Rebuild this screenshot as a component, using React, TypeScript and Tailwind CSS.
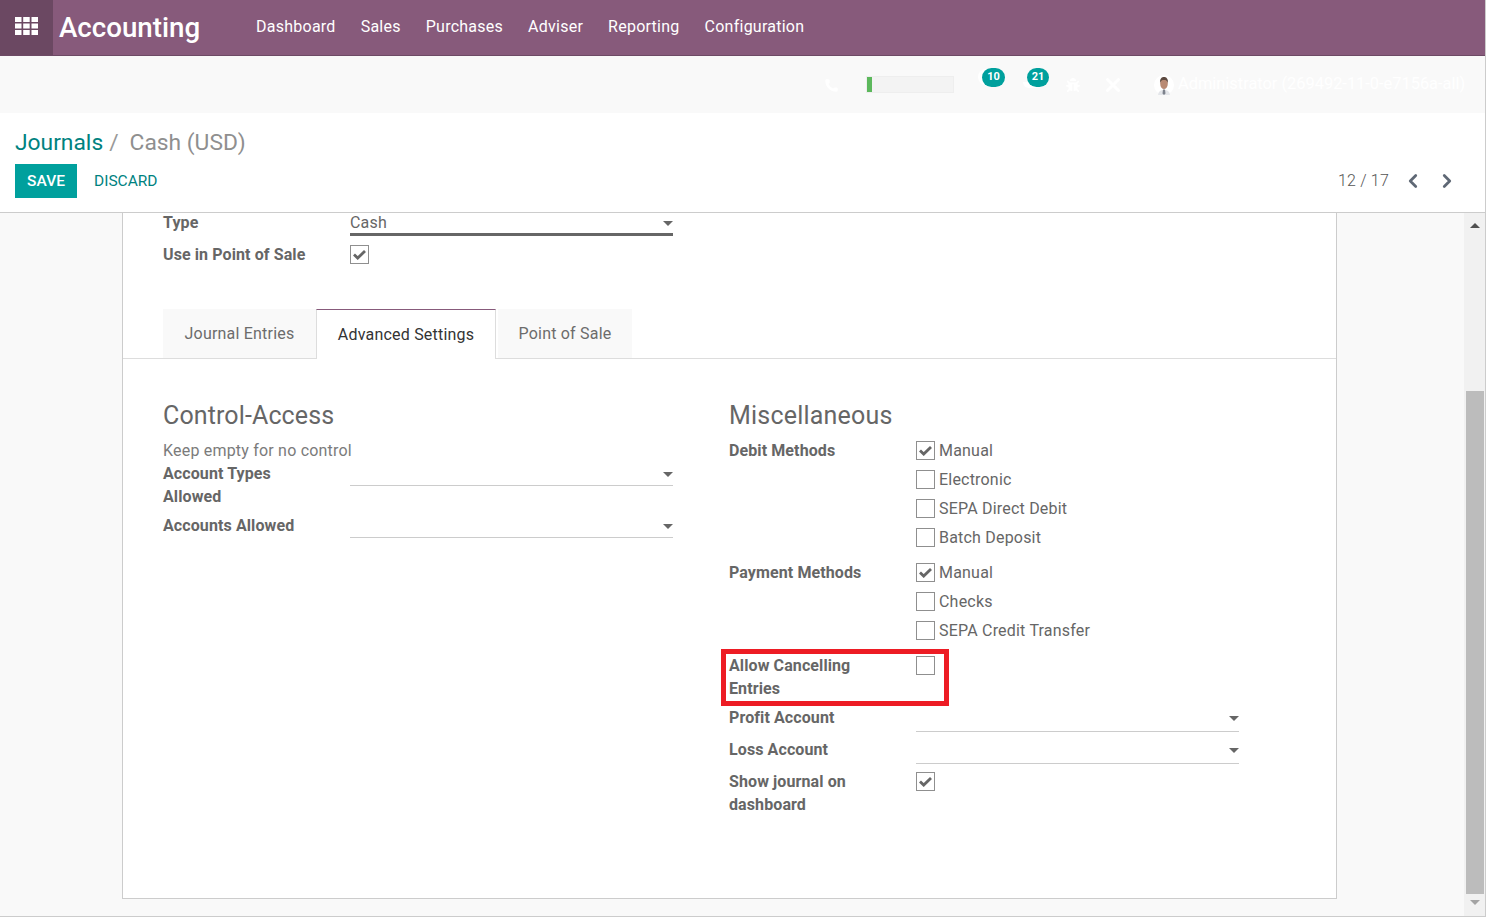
import { Phone, ChevronLeft, ChevronRight } from "lucide-react";
import { FaBug } from "react-icons/fa";

const navItems = ["Dashboard", "Sales", "Purchases", "Adviser", "Reporting", "Configuration"];

function Box({ checked = false }: { checked?: boolean }) {
  return (
    <span className="flex h-[19px] w-[19px] shrink-0 items-center justify-center border border-[#8f8f8f] bg-white">
      {checked && (
        <svg width="13" height="10" viewBox="0 0 13 10" fill="none" stroke="#666666" strokeWidth="2.800">
          <path d="M1 4.500l3.700 3.600L12 1" />
        </svg>
      )}
    </span>
  );
}

function Caret() {
  return <span className="h-0 w-0 border-x-[5px] border-t-[5px] border-x-transparent border-t-[#666666]" />;
}

function SelectField({ value = "", strong = false, width }: { value?: string; strong?: boolean; width: string }) {
  return (
    <div className={`flex items-center justify-between ${width} ${strong ? "border-b-[3px] border-[#666666]" : "border-b border-[#cccccc]"}`}>
      <span className="text-[16px] leading-[20px] text-[#666666]">{value}</span>
      <Caret />
    </div>
  );
}

function Label({ children, className = "" }: { children: React.ReactNode; className?: string }) {
  return <div className={`text-[16px] leading-[23px] font-bold tracking-[0.1px] text-[#666666] ${className}`}>{children}</div>;
}

function CheckRow({ label, checked = false }: { label: string; checked?: boolean }) {
  return (
    <div className="flex h-[29px] items-center gap-[4px] text-[16px] text-[#666666]">
      <Box checked={checked} />
      <span>{label}</span>
    </div>
  );
}

function Systray() {
  return (
    <div className="flex h-[57px] items-center bg-[#f9f9f9] pl-[824px] tracking-normal text-white">
      <Phone size={15} fill="white" strokeWidth={0} className="mt-[1px]" />
      <div className="ml-[27px] h-[17px] w-[88px] border border-[#eeeeee] bg-[#f3f3f3]">
        <div className="h-full w-[5px] bg-[#5cb85c]" />
      </div>
      <div className="relative ml-[28px] h-[20px] w-[23px]">
        <span className="absolute top-[-6px] left-[-4px] h-[16px] w-[18px] rounded-full bg-white" />
        <span className="absolute top-[-7px] left-0 flex h-[19px] w-[23px] items-center justify-center rounded-full bg-[#00a09d] text-[11px] font-bold text-white">10</span>
      </div>
      <div className="relative ml-[22px] h-[20px] w-[22px]">
        <span className="absolute top-[7px] left-[-4px] h-[6px] w-[18px] rounded-b-full bg-white" />
        <span className="absolute top-[-7px] left-0 flex h-[19px] w-[22px] items-center justify-center rounded-full bg-[#00a09d] text-[11px] font-bold text-white">21</span>
      </div>
      <FaBug size={14} className="ml-[17px]" />
      <svg width="16" height="16" viewBox="0 0 16 16" className="ml-[25px]" stroke="white" strokeWidth="3" strokeLinecap="round">
        <path d="M2.500 2.500l11 11M13.500 2.500l-11 11" />
      </svg>
      <svg width="20" height="20" viewBox="0 0 20 20" className="ml-[33px]">
        <circle cx="10" cy="10" r="10" fill="#ffffff" />
        <path d="M4 20c.5-4 3-5 6-5s5.500 1 6 5z" fill="#e4e6ea" />
        <path d="M9 14.500h2l.5 4-1.500 1.500-1.500-1.500z" fill="#7d828c" />
        <ellipse cx="10" cy="8.500" rx="3.800" ry="5.500" fill="#b98a73" />
        <path d="M6 8C5.800 3 8 2 10 2s4.200 1 4 6c-.8-2.500-2.300-3-4-3s-3.200.5-4 3z" fill="#5d4a40" />
      </svg>
      <span className="ml-[4px] text-[16.4px] whitespace-nowrap">Administrator (269492-11-0-e7156a-all)</span>
    </div>
  );
}

export default function App() {
  return (
    <div className="h-[920px] w-full bg-white">
      <div className="flex h-[917px] w-[1486px] flex-col overflow-hidden border-r border-b border-[#cccccc] bg-white font-['Roboto',sans-serif] tracking-[0.2px] text-[#666666]">
        <header className="flex h-[56px] shrink-0 items-center border-b border-[#6d4a65] bg-[#875a7b]">
          <div className="flex h-full w-[53px] items-center justify-center bg-[#6b4862]">
            <svg width="24" height="18" viewBox="0 0 24 18" fill="white" className="mb-[4px]">
              <rect x="0" y="0" width="6.500" height="5" />
              <rect x="8.200" y="0" width="6.500" height="5" />
              <rect x="16.500" y="0" width="6.500" height="5" />
              <rect x="0" y="6.500" width="6.500" height="5" />
              <rect x="8.200" y="6.500" width="6.500" height="5" />
              <rect x="16.500" y="6.500" width="6.500" height="5" />
              <rect x="0" y="13" width="6.500" height="5" />
              <rect x="8.200" y="13" width="6.500" height="5" />
              <rect x="16.500" y="13" width="6.500" height="5" />
            </svg>
          </div>
          <div className="ml-[6px] w-[197px] text-[27.7px] font-medium tracking-normal text-white">Accounting</div>
          <nav className="mb-[2px] flex gap-[25px] text-[16px] tracking-[0.25px] text-white">
            {navItems.map((item) => (
              <span key={item}>{item}</span>
            ))}
          </nav>
        </header>

        <Systray />

        <section className="h-[100px] shrink-0 border-b border-[#cccccc] bg-white px-[15px]">
          <div className="flex h-[51px] items-end pb-[3px] text-[22.8px] leading-[36px] tracking-normal">
            <span className="text-[#00827f]">Journals</span>
            <span className="ml-[6px] text-[#999999]">/</span>
            <span className="ml-[11px] text-[#8f8f8f]">Cash (USD)</span>
          </div>
          <div className="flex items-center justify-between">
            <div className="flex items-center">
              <button className="h-[34px] w-[62px] bg-[#00a09d] pt-[2px] text-[15.5px] font-medium tracking-normal text-white">SAVE</button>
              <button className="ml-[17px] pt-[2px] text-[15.5px] tracking-normal text-[#00827f]">DISCARD</button>
            </div>
            <div className="flex items-center pr-[12px]">
              <span className="text-[16px] font-light text-[#555555]">12 / 17</span>
              <ChevronLeft size={22} strokeWidth={3} className="ml-[13px] text-[#5f6875]" />
              <ChevronRight size={22} strokeWidth={3} className="ml-[12px] text-[#5f6875]" />
            </div>
          </div>
        </section>

        <main className="flex min-h-0 flex-1 bg-[#f9f9f9]">
          <div className="flex-1 pl-[122px]">
            <div className="h-[686px] w-[1215px] border-x border-b border-[#cccccc] bg-white">
              <div className="pl-[40px]">
                <div className="flex h-[19px] items-start">
                  <Label className="-mt-[2px] w-[187px]">Type</Label>
                  <SelectField value="Cash" strong width="w-[323px] h-[23px]" />
                </div>
                <div className="mt-[11px] flex h-[23px] items-center">
                  <Label className="w-[187px]">Use in Point of Sale</Label>
                  <Box checked />
                </div>
              </div>

              <div className="mt-[43px] flex h-[50px] items-end border-b border-[#dddddd] pl-[40px]">
                <div className="flex h-[49px] w-[153px] items-center justify-center bg-[#f9f9f9] text-[16px] text-[#6c6c6c]">Journal Entries</div>
                <div className="relative -mb-[1px] flex h-[50px] w-[180px] items-center justify-center border-x border-t border-[#dddddd] border-t-[#875a7b] bg-white pt-[1px] text-[16px] text-[#333333]">Advanced Settings</div>
                <div className="ml-[2px] flex h-[49px] w-[134px] items-center justify-center bg-[#f9f9f9] text-[16px] text-[#6c6c6c]">Point of Sale</div>
              </div>

              <div className="flex pt-[39px] pl-[40px]">
                <div className="w-[566px]">
                  <h2 className="text-[25px] leading-[36px] tracking-[0.12px] text-[#666666]">Control-Access</h2>
                  <div className="mt-[5px] text-[16px] leading-[23px] text-[#7b7b7b]">Keep empty for no control</div>
                  <div className="flex">
                    <Label className="w-[187px]">Account Types<br />Allowed</Label>
                    <SelectField width="w-[323px] h-[24px] pt-[2px]" />
                  </div>
                  <div className="mt-[6px] flex">
                    <Label className="w-[187px]">Accounts Allowed</Label>
                    <SelectField width="w-[323px] h-[24px] pt-[2px]" />
                  </div>
                </div>

                <div>
                  <h2 className="text-[25px] leading-[36px] text-[#666666]">Miscellaneous</h2>
                  <div className="mt-[2px] flex">
                    <Label className="w-[187px] pt-[3px]">Debit Methods</Label>
                    <div>
                      <CheckRow label="Manual" checked />
                      <CheckRow label="Electronic" />
                      <CheckRow label="SEPA Direct Debit" />
                      <CheckRow label="Batch Deposit" />
                    </div>
                  </div>
                  <div className="mt-[6px] flex">
                    <Label className="w-[187px] pt-[3px]">Payment Methods</Label>
                    <div>
                      <CheckRow label="Manual" checked />
                      <CheckRow label="Checks" />
                      <CheckRow label="SEPA Credit Transfer" />
                    </div>
                  </div>
                  <div className="relative mt-[9px] flex h-[46px]">
                    <span className="absolute top-[-5px] left-[-8px] h-[57px] w-[228px] border-[5px] border-[#ed1c24]" />
                    <Label className="w-[187px]">Allow Cancelling<br />Entries</Label>
                    <div className="pt-[2px]"><Box /></div>
                  </div>
                  <div className="mt-[6px] flex h-[26px]">
                    <Label className="w-[187px]">Profit Account</Label>
                    <SelectField width="w-[323px] h-[26px]" />
                  </div>
                  <div className="mt-[6px] flex h-[26px]">
                    <Label className="w-[187px]">Loss Account</Label>
                    <SelectField width="w-[323px] h-[26px]" />
                  </div>
                  <div className="mt-[6px] flex">
                    <Label className="w-[187px]">Show journal on<br />dashboard</Label>
                    <div className="pt-[2px]"><Box checked /></div>
                  </div>
                </div>
              </div>
            </div>
          </div>

          <div className="flex w-[21px] shrink-0 flex-col items-center bg-[#f1f1f1]">
            <span className="mt-[10px] h-0 w-0 border-x-[5px] border-b-[5px] border-x-transparent border-b-[#505050]" />
            <div className="mt-[163px] h-[503px] w-[18px] bg-[#bcbcbc]" />
            <span className="mt-[6px] h-0 w-0 border-x-[5px] border-t-[5px] border-x-transparent border-t-[#a3a3a3]" />
          </div>
        </main>
      </div>
    </div>
  );
}
